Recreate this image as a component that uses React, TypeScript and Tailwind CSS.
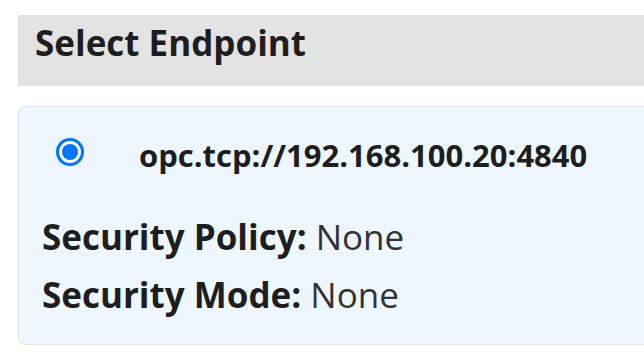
export default function App() {
  return (
    <main
      className="min-h-screen bg-white pl-[18px] pt-[15px] overflow-hidden"
      style={{ fontFamily: '"Open Sans", Lato, sans-serif' }}
    >
      {/* Header */}
      <div className="h-[71px] bg-[#e3e3e3] pl-[17px] pt-[10px] w-[700px]">
        <h2 className="text-[35px] font-bold text-[#1e1e1e] leading-none">Select Endpoint</h2>
      </div>

      {/* Endpoint card */}
      <div className="mt-[20px] w-[700px] h-[239px] rounded-lg border border-[#dce4ee] bg-[#eef6ff] pl-[23px] pt-[31px]">
        <label className="flex items-start">
          <span className="ml-[14px] w-[28px] h-[28px] shrink-0">
            <svg width="28" height="28" viewBox="0 0 28 28">
              <circle cx="14" cy="14" r="12.5" fill="#ffffff" stroke="#0075ff" strokeWidth="3" />
              <circle cx="14" cy="14" r="8" fill="#0075ff" />
            </svg>
          </span>
          <span className="ml-[55px] mt-[2px] text-[31px] font-bold text-[#1e1e1e] leading-none">
            opc.tcp://192.168.100.20:4840
          </span>
        </label>
        <div className="mt-[37px] text-[35px] text-[#333] leading-[58px]">
          <p>
            <span className="font-bold text-[#1e1e1e]">Security Policy:</span> None
          </p>
          <p>
            <span className="font-bold text-[#1e1e1e]">Security Mode:</span> None
          </p>
        </div>
      </div>
    </main>
  )
}
